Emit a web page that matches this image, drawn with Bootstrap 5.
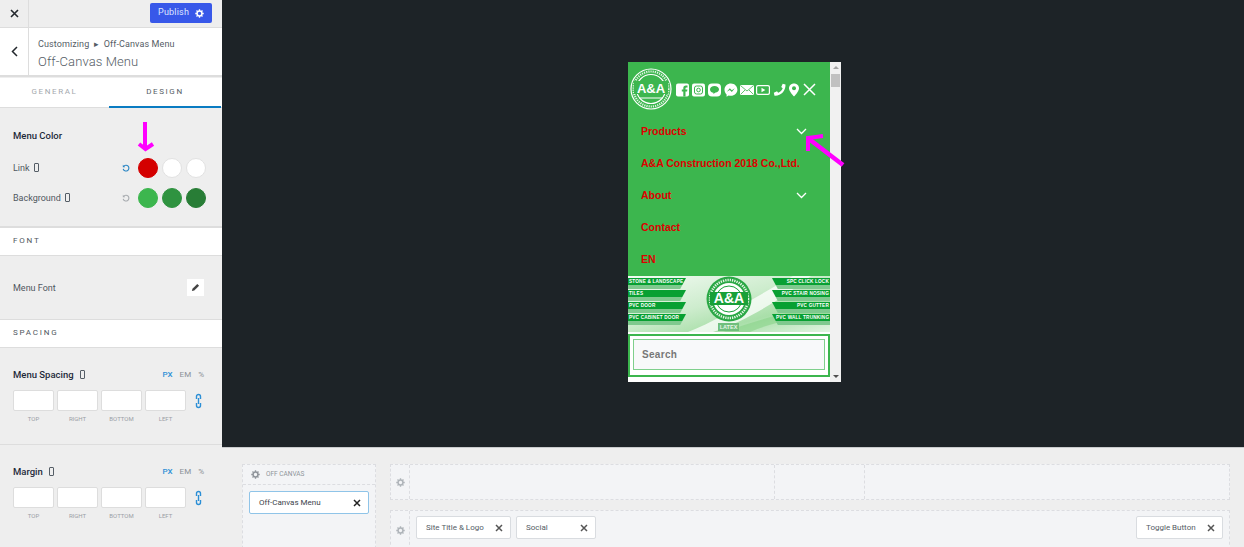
<!DOCTYPE html>
<html lang="en"><head><meta charset="utf-8">
<link href="https://cdn.jsdelivr.net/npm/bootstrap@5.3.0/dist/css/bootstrap.min.css" rel="stylesheet">
<style>
html,body{height:547px;overflow:hidden;margin:0}
body{font-family:Roboto,"Noto Sans",sans-serif;font-size:9px;color:#50575e;background:#eee;position:relative}
.shell{width:1244px;height:547px}
.side{width:222px;height:547px;background:#eee;flex:none;overflow:hidden}
.topbar{height:28px;border-bottom:1px solid #ddd}
.closer{width:29px;border-right:1px solid #ddd;color:#23282d}
.pub{width:62px;height:20px;background:#3858e9;border-radius:2px;color:#dfe5ff;font-size:9px;letter-spacing:.2px;margin:3px 10px 0 0}
.crumb{height:49px;background:#fff;border-bottom:2px solid #ddd}
.backbox{width:29px;border-right:1px solid #ddd}
.crumbs{padding:9px 0 0 9px;font-size:9px;line-height:14px;color:#555d66;letter-spacing:.1px}
.crumbs b{display:block;font-weight:300;font-size:13px;line-height:21px;letter-spacing:.1px}
.tabset{height:30px;background:#fff;border-bottom:1px solid #ddd;margin-top:1px}
.tabitem{width:109px;text-align:center;font-size:8px;letter-spacing:1.6px;color:#a5a9ae;line-height:27px}
.tabitem.on{width:112px;color:#555d66;border-bottom:2px solid #0a7cc2;height:30px}
.colorbox{height:119px;padding:21px 16px 0 13px;border-bottom:1px solid #ddd}
.ttl{font-size:9.5px;font-weight:500;color:#1e2a3a}
.ttlgap{margin-bottom:10px}
.devi{display:inline-block;width:5px;height:9px;border:1px solid #555d66;border-radius:1px;margin-left:4px;vertical-align:-1px}
.rowline{height:30px}
.rst{width:8px;height:8px;margin-right:4px}
.dot{width:20px;height:20px;border-radius:50%;margin-left:4px;border:1px solid #e2e2e2;background:#fff}
.sect{height:29px;background:#fff;border-bottom:1px solid #ddd;border-top:1px solid #ddd;padding-left:13px;font-size:8px;letter-spacing:1.8px;line-height:26px;color:#50575e}
.fontbox{height:63px;padding:3px 18px 0 13px}
.penbox{width:17px;height:17px;background:#fff;margin-top:-4px}
.spacebox{height:97px;padding:20px 18px 0 13px;border-bottom:1px solid #ddd}
.units{font-size:8px;color:#8a9097;gap:7px}
.units .blue{color:#2c8fd6;font-weight:500}
.boxes{gap:3px;margin-top:8px}
.box1{width:41px;height:21px;background:#fff;border:1px solid #ddd;border-radius:2px}
.lbls{gap:3px;margin-top:3px;font-size:6px;color:#9ba0a6}
.lbls span{width:41px;text-align:center}
.chain{width:11px;margin-left:4px}
.main{flex:1;min-width:0;display:flex;flex-direction:column}
.stage{height:448px;flex:none;background:#1d2327;border-bottom:1px solid #c9cbcd;padding:62px 0 0 406px}
.frame{width:213px;height:320px;background:#f1f1f1;display:flex;position:relative}
.site{width:202px;height:320px;background:#fff;flex:none}
.greenpane{height:214px;background:#3cb64e}
.hdr{height:53px;position:relative;padding:0 0 0 2px}
.logo{width:42px;height:42px;margin-top:6px;flex:none}
.ico{gap:2px;margin:21px 0 0 4px}
.nv{height:32px;padding:0 23px 0 13px;color:#dd0000;font:700 10.5px "Liberation Sans",sans-serif;white-space:nowrap}
.bannerx{height:56px;display:block;position:relative;overflow:hidden;background:#fff}
.artwork{position:absolute;left:0;top:0}
.bar{position:absolute;height:11px;width:58px;font:700 4.7px "Liberation Sans",sans-serif;color:#fff;background:linear-gradient(#08a032 0 7px,#7fc98e 7px);line-height:7px;letter-spacing:.18px;white-space:nowrap;padding:0 4px 0 1px}
.bar.l{left:0;clip-path:polygon(0 0,100% 0,90% 100%,0 100%)}
.bar.r{right:0;text-align:right;padding:0 1px 0 4px;clip-path:polygon(0 0,100% 0,100% 100%,10% 100%)}
.searchw{height:43px;border:2px solid #3cb64e;margin:2px 0 0;padding:3px;background:#fff}
.sinp{height:31px;border:1px solid #7fd08c;background:#f8f9fa;font:700 10px "Liberation Sans",sans-serif;color:#777;padding-left:8px;letter-spacing:.3px}
.scrolly{width:11px;flex:none;position:relative;background:#f1f1f1}
.thumb{position:absolute;left:1px;top:12px;width:9px;height:13px;background:#c1c1c1}
.tri1,.tri2{position:absolute;left:3px;width:0;height:0;border-left:3px solid transparent;border-right:3px solid transparent}
.tri1{top:4px;border-bottom:3px solid #a3a3a3}
.tri2{bottom:4px;border-top:3px solid #505050}
.dock{height:99px;background:#eee;padding:16px 14px 0 20px;gap:14px}
.leftcol{width:134px;height:100px;background:#f3f4f6;border:1px dashed #dcdde1;border-bottom:0}
.ochead{height:20px;border-bottom:1px dashed #dcdde1;padding-left:8px;font-size:6.5px;color:#8f949a;gap:6px}
.chip{height:23px;background:#fff;border:1px solid #d9dce0;border-radius:2px;font-size:8px;color:#555d66;padding:0 7px 0 9px}
.chip.act{width:120px;margin:6px 0 0 6px;border-color:#8fc4e8;color:#3c434a}
.rows{flex:1;min-width:0}
.rowa{height:36px;background:#f3f4f6;border:1px dashed #dcdde1}
.rowb{height:40px;margin-top:10px;background:#f3f4f6;border:1px dashed #dcdde1;border-bottom:0}
.gearc{width:19px;border-right:1px dashed #dcdde1;flex:none}
.cell1{width:365px;border-right:1px dashed #dcdde1}
.cell2{width:90px;border-right:1px dashed #dcdde1}
.chiprow{gap:5px;padding:5px 6px 0 6px}
.arrow{position:absolute;pointer-events:none}
</style></head><body>
<svg width="0" height="0" class="d-none"><defs><symbol id="gear" viewBox="0 0 16 16"><circle cx="8" cy="8" r="4.300" fill="none" stroke="currentColor" stroke-width="2.600"/><path d="M8 .5v3M8 12.500v3M.5 8h3M12.500 8h3M2.700 2.700l2.100 2.100M11.200 11.200l2.100 2.100M2.700 13.300l2.100-2.100M11.200 4.800l2.100-2.100" stroke="currentColor" stroke-width="2.400"/></symbol></defs></svg>
<div class="shell d-flex">
<aside class="side">
 <div class="topbar d-flex justify-content-between">
  <div class="closer d-flex align-items-center justify-content-center"><svg width="9" height="9" viewBox="0 0 9 9"><path d="M1 1l7 7M8 1l-7 7" stroke="#23282d" stroke-width="1.600"/></svg></div>
  <div class="pub d-flex align-items-center justify-content-between px-2"><span>Publish</span><svg width="9" height="9" class="text-white"><use href="#gear"/></svg></div>
 </div>
 <div class="crumb d-flex">
  <div class="backbox d-flex align-items-center justify-content-center"><svg width="7" height="11" viewBox="0 0 7 11"><path d="M6 1L1.500 5.500 6 10" fill="none" stroke="#23282d" stroke-width="1.500"/></svg></div>
  <div class="crumbs">Customizing &nbsp;▸&nbsp; Off-Canvas Menu<b>Off-Canvas Menu</b></div>
 </div>
 <div class="tabset d-flex"><div class="tabitem">GENERAL</div><div class="tabitem on">DESIGN</div></div>
 <div class="colorbox">
  <div class="ttl ttlgap">Menu Color</div>
  <div class="rowline d-flex align-items-center"><span>Link<i class="devi"></i></span><span class="ms-auto d-flex align-items-center"><svg class="rst" viewBox="0 0 10 10"><path d="M2 3.200A3.600 3.600 0 1 1 1.500 6" fill="none" stroke="#2a86c4" stroke-width="1.400"/><path d="M1 1v3h3z" fill="#2a86c4"/></svg><i class="dot" style="background:#d40000;border-color:#d40000"></i><i class="dot"></i><i class="dot"></i></span></div>
  <div class="rowline d-flex align-items-center"><span>Background<i class="devi"></i></span><span class="ms-auto d-flex align-items-center"><svg class="rst" viewBox="0 0 10 10"><path d="M2 3.200A3.600 3.600 0 1 1 1.500 6" fill="none" stroke="#a8acb0" stroke-width="1.400"/><path d="M1 1v3h3z" fill="#a8acb0"/></svg><i class="dot" style="background:#3cb64e;border-color:#3cb64e"></i><i class="dot" style="background:#2f9340;border-color:#2f9340"></i><i class="dot" style="background:#287d36;border-color:#287d36"></i></span></div>
 </div>
 <div class="sect">FONT</div>
 <div class="fontbox d-flex align-items-center justify-content-between"><span>Menu Font</span><span class="penbox d-flex align-items-center justify-content-center"><svg width="9" height="9" viewBox="0 0 10 10"><path d="M1 9l.6-2.600L7 1l2 2-5.400 5.400z" fill="#444"/></svg></span></div>
 <div class="sect">SPACING</div>
 <div class="spacebox">
  <div class="d-flex justify-content-between align-items-center"><span class="ttl">Menu Spacing <i class="devi"></i></span><span class="units d-flex"><span class="blue">PX</span><span>EM</span><span>%</span></span></div>
  <div class="boxes d-flex align-items-center"><i class="box1"></i><i class="box1"></i><i class="box1"></i><i class="box1"></i><svg class="chain" height="16" viewBox="0 0 8 16"><path d="M2 6V3.500a2 2 0 0 1 4 0V6M2 10v2.500a2 2 0 0 0 4 0V10M4 5v6" fill="none" stroke="#2c8fd6" stroke-width="1.400"/></svg></div>
  <div class="lbls d-flex"><span>TOP</span><span>RIGHT</span><span>BOTTOM</span><span>LEFT</span></div>
 </div>
 <div class="spacebox border-0">
  <div class="d-flex justify-content-between align-items-center"><span class="ttl">Margin <i class="devi"></i></span><span class="units d-flex"><span class="blue">PX</span><span>EM</span><span>%</span></span></div>
  <div class="boxes d-flex align-items-center"><i class="box1"></i><i class="box1"></i><i class="box1"></i><i class="box1"></i><svg class="chain" height="16" viewBox="0 0 8 16"><path d="M2 6V3.500a2 2 0 0 1 4 0V6M2 10v2.500a2 2 0 0 0 4 0V10M4 5v6" fill="none" stroke="#2c8fd6" stroke-width="1.400"/></svg></div>
  <div class="lbls d-flex"><span>TOP</span><span>RIGHT</span><span>BOTTOM</span><span>LEFT</span></div>
 </div>
</aside>
<main class="main">
 <div class="stage">
  <div class="frame">
   <div class="site">
    <div class="greenpane">
     <div class="hdr d-flex">
      <svg class="logo" viewBox="0 0 42 42"><circle cx="21" cy="21" r="20" fill="none" stroke="#fff" stroke-width="1.200"/><circle cx="21" cy="21" r="17.500" fill="none" stroke="#dff5e2" stroke-width="2.200" stroke-dasharray="1.200 1"/><circle cx="21" cy="21" r="14.500" fill="none" stroke="#fff" stroke-width="1.100"/><rect x="4" y="13" width="34" height="13" fill="#3cb64e"/><text x="21" y="24.500" text-anchor="middle" font-family="Liberation Sans" font-weight="700" font-size="13" fill="#fff">A&amp;A</text><path d="M9 30h24" stroke="#fff" stroke-width="1"/></svg>
      <div class="ico d-flex">
       <svg width="14" height="14" viewBox="0 0 14 14"><rect width="13" height="13" y=".5" rx="2" fill="#fff"/><path d="M9.500 13.500V8.500h1.600l.3-2H9.500V5.400c0-.6.3-1 1-1h1V2.600H10C8.200 2.600 7.300 3.700 7.300 5.200v1.300H5.800v2h1.500v5z" fill="#3cb64e"/></svg>
       <svg width="14" height="14" viewBox="0 0 14 14"><rect width="13" height="13" y=".5" rx="2" fill="#fff"/><rect x="2.500" y="3" width="8" height="8" rx="2" fill="none" stroke="#3cb64e"/><circle cx="6.500" cy="7" r="1.800" fill="none" stroke="#3cb64e"/></svg>
       <svg width="14" height="14" viewBox="0 0 14 14"><rect width="13" height="13" y=".5" rx="4" fill="#fff"/><path d="M6.500 3c-2.500 0-4.500 1.500-4.500 3.400 0 1.700 1.500 3 3.500 3.300L5.300 11l2.300-1.400c1.900-.5 3.400-1.700 3.400-3.200C11 4.500 9 3 6.500 3z" fill="#3cb64e"/></svg>
       <svg width="14" height="14" viewBox="0 0 14 14"><path d="M7 .5C3.300.5.500 3.200.500 6.800c0 1.900.8 3.500 2.100 4.600v2.300l2-1.200c.7.200 1.500.3 2.300.3 3.700 0 6.500-2.700 6.500-6S10.700.5 7 .5z" fill="#fff"/><path d="M2.800 8.800l3-3.500 2 2 3-2-3 3.800-2-2z" fill="#3cb64e"/></svg>
       <svg width="14" height="14" viewBox="0 0 14 14"><rect y="2" width="14" height="10" rx="1.500" fill="#fff"/><path d="M1 3l6 5 6-5M1 11l4-4M13 11L9 7" fill="none" stroke="#3cb64e" stroke-width=".8"/></svg>
       <svg width="14" height="14" viewBox="0 0 14 14"><rect y="2" width="14" height="10" rx="2" fill="#fff"/><rect x="1.200" y="3.200" width="11.600" height="7.600" rx="1" fill="#3cb64e"/><path d="M5.500 4.800v4.400L9.300 7z" fill="#fff"/></svg>
       <svg width="14" height="14" viewBox="0 0 14 14"><path d="M13.500 1.500L10.700.8 9.200 4l1.500 1.200c-.8 1.900-2.500 3.700-4.500 4.600L5 8.300 1.800 9.800l.7 2.900C8.800 13.200 13.800 8 13.500 1.500z" fill="#fff"/></svg>
       <svg width="12" height="14" viewBox="0 0 12 14"><path d="M6 .5C3 .5 1 2.700 1 5.200 1 8.500 6 13.500 6 13.500s5-5 5-8.300C11 2.700 9 .5 6 .5z" fill="#fff"/><circle cx="6" cy="5.300" r="2" fill="#3cb64e"/></svg>
       <svg width="15" height="15" viewBox="0 0 15 15" style="margin-top:-1px"><path d="M2 2l11 11M13 2L2 13" stroke="#fff" stroke-width="1.500"/></svg>
      </div>
     </div>
     <div class="nv d-flex align-items-center justify-content-between"><span>Products</span><svg width="11" height="7" viewBox="0 0 11 7"><path d="M1 1l4.500 4.500L10 1" fill="none" stroke="#fff" stroke-width="1.300"/></svg></div>
     <div class="nv d-flex align-items-center"><span>A&amp;A Construction 2018 Co.,Ltd.</span></div>
     <div class="nv d-flex align-items-center justify-content-between"><span>About</span><svg width="11" height="7" viewBox="0 0 11 7"><path d="M1 1l4.500 4.500L10 1" fill="none" stroke="#fff" stroke-width="1.300"/></svg></div>
     <div class="nv d-flex align-items-center"><span>Contact</span></div>
     <div class="nv d-flex align-items-center"><span>EN</span></div>
    </div>
    <div class="bannerx">
     <svg class="artwork" width="202" height="56" viewBox="0 0 202 56"><defs><linearGradient id="bgg" x1="0" x2="1" y1="0" y2="1"><stop offset="0" stop-color="#f4fbf4"/><stop offset=".45" stop-color="#cdeccd"/><stop offset=".7" stop-color="#a9dfa9"/><stop offset="1" stop-color="#e2f4e2"/></linearGradient></defs><rect width="202" height="56" fill="url(#bgg)"/><path d="M60 56C90 44 130 20 165 0h18C150 26 115 46 85 56z" fill="#ffffff" opacity=".75"/><path d="M95 56C125 46 160 34 202 30v9C165 42 140 48 122 56z" fill="#8fd68f" opacity=".7"/><circle cx="101" cy="23" r="22.500" fill="#2aa845"/><circle cx="101" cy="23" r="19" fill="none" stroke="#e6f6e6" stroke-width="2.500" stroke-dasharray="1.300 1"/><circle cx="101" cy="23" r="16" fill="#fff"/><circle cx="101" cy="23" r="13" fill="none" stroke="#18a038" stroke-width="1"/><rect x="82" y="16" width="38" height="13" fill="#18a038"/><text x="101" y="27" text-anchor="middle" font-family="Liberation Sans" font-weight="700" font-size="14" fill="#fff">A&amp;A</text><rect x="90" y="47" width="21" height="8" fill="#6fbf7c"/><text x="100.500" y="53" text-anchor="middle" font-family="Liberation Sans" font-weight="700" font-size="5.500" fill="#e8f6e8">LATEX</text></svg>
     <div class="bar l" style="top:2px">STONE &amp; LANDSCAPE</div><div class="bar l" style="top:14px">TILES</div><div class="bar l" style="top:26px">PVC DOOR</div><div class="bar l" style="top:38px">PVC CABINET DOOR</div>
     <div class="bar r" style="top:2px">SPC CLICK LOCK</div><div class="bar r" style="top:14px">PVC STAIR NOSING</div><div class="bar r" style="top:26px">PVC GUTTER</div><div class="bar r" style="top:38px">PVC WALL TRUNKING</div>
    </div>
    <div class="searchw"><div class="sinp d-flex align-items-center">Search</div></div>
   </div>
   <div class="scrolly"><i class="tri1"></i><i class="thumb"></i><i class="tri2"></i></div>
  </div>
 </div>
 <div class="dock d-flex">
  <div class="leftcol">
   <div class="ochead d-flex align-items-center"><svg width="9" height="9"><use href="#gear"/></svg>OFF CANVAS</div>
   <div class="chip act d-flex align-items-center justify-content-between"><span>Off-Canvas Menu</span><svg width="8" height="8" viewBox="0 0 8 8"><path d="M1 1l6 6M7 1L1 7" stroke="#222" stroke-width="1.500"/></svg></div>
  </div>
  <div class="rows">
   <div class="rowa d-flex"><div class="gearc d-flex align-items-center justify-content-center text-secondary"><svg width="9" height="9" class="opacity-50"><use href="#gear"/></svg></div><div class="cell1"></div><div class="cell2"></div></div>
   <div class="rowb d-flex"><div class="gearc d-flex align-items-center justify-content-center text-secondary"><svg width="9" height="9" class="opacity-50"><use href="#gear"/></svg></div>
    <div class="chiprow d-flex flex-fill">
     <div class="chip d-flex align-items-center justify-content-between" style="width:95px"><span>Site Title &amp; Logo</span><svg width="8" height="8" viewBox="0 0 8 8"><path d="M1 1l6 6M7 1L1 7" stroke="#555" stroke-width="1.500"/></svg></div>
     <div class="chip d-flex align-items-center justify-content-between" style="width:80px"><span>Social</span><svg width="8" height="8" viewBox="0 0 8 8"><path d="M1 1l6 6M7 1L1 7" stroke="#555" stroke-width="1.500"/></svg></div>
     <div class="chip d-flex align-items-center justify-content-between ms-auto" style="width:87px"><span>Toggle Button</span><svg width="8" height="8" viewBox="0 0 8 8"><path d="M1 1l6 6M7 1L1 7" stroke="#555" stroke-width="1.500"/></svg></div>
    </div>
   </div>
  </div>
 </div>
</main>
</div>
<svg class="arrow" style="left:134px;top:120px" width="24" height="34" viewBox="0 0 24 34"><path d="M11 2v26" fill="none" stroke="#f0f" stroke-width="4"/><path d="M5 24l6.500 5L19 24" fill="none" stroke="#f0f" stroke-width="4"/></svg>
<svg class="arrow" style="left:800px;top:128px" width="46" height="40" viewBox="0 0 46 40"><path d="M43 37L9 11" fill="none" stroke="#f0f" stroke-width="4.500"/><path d="M23 8L8 10v13" fill="none" stroke="#f0f" stroke-width="4"/></svg>
</body></html>
